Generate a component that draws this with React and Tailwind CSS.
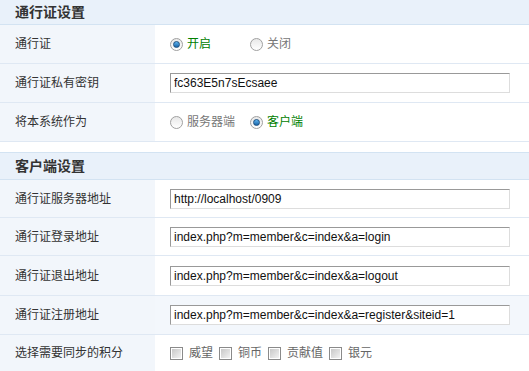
import React from "react";

const cn = "font-['Arial','Liberation_Sans','Noto_Sans_CJK_SC',sans-serif]";

const Radio = ({ checked, label }) => (
	<label className="flex items-center">
		<span className="flex h-[13px] w-[13px] items-center justify-center rounded-full border border-[#a0a0a0] bg-gradient-to-b from-[#e8e8e8] to-[#ffffff]">
			{checked && (
				<span className="h-[7px] w-[7px] rounded-full border border-[#1b4f80] bg-gradient-to-b from-[#5fb4f0] to-[#1665a8]" />
			)}
		</span>
		<span className={"ml-[4px] " + (checked ? "text-[#008000]" : "text-[#777]")}>
			{label}
		</span>
	</label>
);

const Check = ({ label }) => (
	<label className="mr-[6px] flex items-center">
		<span className="flex h-[13px] w-[13px] items-center justify-center border border-[#8a8a8a] bg-white">
			<span className="h-[9px] w-[9px] bg-gradient-to-br from-[#c8c8c8] to-[#f2f2f2]" />
		</span>
		<span className="ml-[6px] text-[#666]">{label}</span>
	</label>
);

const Field = ({ value }) => (
	<input
		readOnly
		value={value}
		className="h-[20px] w-[340px] border border-t-[#999] border-l-[#999] border-r-[#ddd] border-b-[#ddd] bg-white px-[3px] text-[12px] text-[#111] outline-none"
	/>
);

const Row = ({ label, h = "h-[39px]", alt, children }) => (
	<div className={"flex border-b border-[#dfe8f3] " + h + (alt ? " bg-[#f3f7fc]" : " bg-white")}>
		<div className="flex w-[155px] shrink-0 items-center bg-[#f2f6fb] pl-[15px] text-[#333]">
			{label}
		</div>
		<div className="flex flex-1 items-center pl-[15px]">{children}</div>
	</div>
);

const Head = ({ title, top }) => (
	<div
		className={
			"flex items-center border-b border-[#d3e3f2] bg-[#e9f1fa] pl-[15px] text-[14px] font-bold text-[#333] " +
			(top ? "h-[25px]" : "h-[28px] border-t")
		}
	>
		{title}
	</div>
);

export default function App() {
	return (
		<div className={"h-[371px] w-[529px] overflow-hidden bg-white text-[12px] " + cn}>
			<Head title="通行证设置" top />
			<Row label="通行证">
				<div className="w-[80px]">
					<Radio checked label="开启" />
				</div>
				<Radio label="关闭" />
			</Row>
			<Row label="通行证私有密钥">
				<Field value="fc363E5n7sEcsaee" />
			</Row>
			<Row label="将本系统作为">
				<div className="w-[80px]">
					<Radio label="服务器端" />
				</div>
				<Radio checked label="客户端" />
			</Row>
			<div className="h-[10px]" />
			<Head title="客户端设置" />
			<Row label="通行证服务器地址" h="h-[38px]">
				<Field value="http://localhost/0909" />
			</Row>
			<Row label="通行证登录地址" h="h-[38px]">
				<Field value="index.php?m=member&c=index&a=login" />
			</Row>
			<Row label="通行证退出地址" h="h-[40px]">
				<Field value="index.php?m=member&c=index&a=logout" />
			</Row>
			<Row label="通行证注册地址" alt>
				<Field value="index.php?m=member&c=index&a=register&siteid=1" />
			</Row>
			<Row label="选择需要同步的积分" h="h-[37px]">
				<Check label="威望" />
				<Check label="铜币" />
				<Check label="贡献值" />
				<Check label="银元" />
			</Row>
		</div>
	);
}
